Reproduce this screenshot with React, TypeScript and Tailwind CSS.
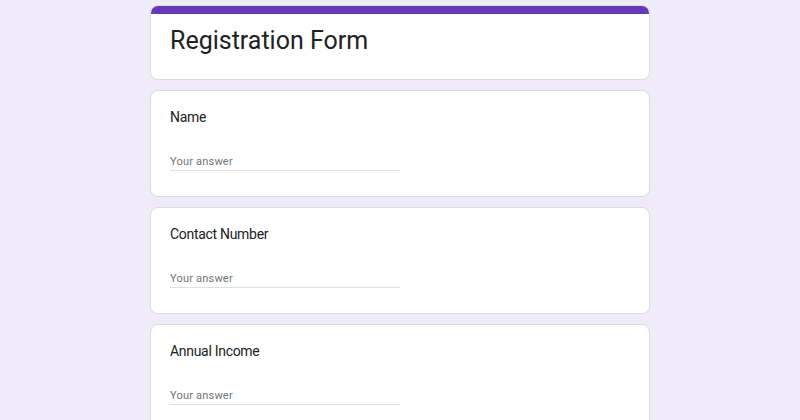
import React from 'react';

interface QuestionProps {
  label: string;
}

const Question: React.FC<QuestionProps> = ({ label }) => (
  <div className="bg-white border border-[#dadce0] rounded-lg px-[19px] pt-[16px] pb-[25px]">
    <div className="text-[14px] leading-[20px] h-[20px] text-[#202124] tracking-[-0.3px]">{label}</div>
    <div className="mt-[26px] w-[230px] border-b border-[#e0e0e0]">
      <input
        type="text"
        placeholder="Your answer"
        className="block w-full h-[17px] p-0 text-[11px] leading-[16px] tracking-[0.2px] text-[#202124] placeholder-[#70757a] outline-none bg-transparent"
      />
    </div>
  </div>
);

export default function App() {
  return (
    <div
      className="min-h-screen bg-[#f0ebf8] pt-[5px]"
      style={{ fontFamily: 'Roboto, "Noto Sans", sans-serif' }}
    >
      <div className="w-[500px] mx-auto flex flex-col gap-[10px]">
        <div className="bg-white border border-[#dadce0] rounded-lg overflow-hidden">
          <div className="h-[8px] bg-[#673ab7]" />
          <div className="px-[19px] pt-[11px] pb-[22px]">
            <h1 className="text-[25px] leading-[32px] h-[32px] text-[#202124]">Registration Form</h1>
          </div>
        </div>
        <Question label="Name" />
        <Question label="Contact Number" />
        <Question label="Annual Income" />
      </div>
    </div>
  );
}
